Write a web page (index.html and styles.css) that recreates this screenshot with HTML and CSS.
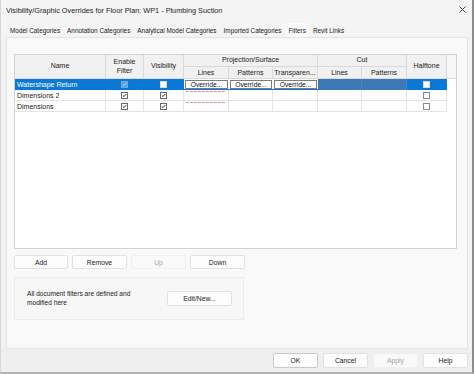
FILE: index.html
```html
<!DOCTYPE html>
<html>
<head>
<meta charset="utf-8">
<link rel="stylesheet" href="styles.css">
</head>
<body>
<div class="window">
  <div class="titlebar">
    <span class="title">Visibility/Graphic Overrides for Floor Plan: WP1 - Plumbing Suction</span>
    <svg class="close" width="7" height="7" viewBox="0 0 7 7"><path d="M0.5 0.5L6.5 6.5M6.5 0.5L0.5 6.5" stroke="#333" stroke-width="0.9" fill="none"/></svg>
  </div>
  <div class="tabs">
    <span class="tab">Model Categories</span>
    <span class="tab">Annotation Categories</span>
    <span class="tab">Analytical Model Categories</span>
    <span class="tab">Imported Categories</span>
    <span class="tab active">Filters</span>
    <span class="tab">Revit Links</span>
  </div>
  <div class="panel">
    <div class="grid-wrap">
      <div class="grid">
        <div class="hc c-name">Name</div>
        <div class="hc c-enable">Enable<br>Filter</div>
        <div class="hc c-vis">Visibility</div>
        <div class="hc c-proj">Projection/Surface</div>
        <div class="hc c-cut">Cut</div>
        <div class="hc c-half">Halftone</div>
        <div class="hc c-extra"></div>
        <div class="hc sub">Lines</div>
        <div class="hc sub">Patterns</div>
        <div class="hc sub">Transparen...</div>
        <div class="hc sub">Lines</div>
        <div class="hc sub">Patterns</div>

        <div class="dc name sel">Watershape Return</div>
        <div class="dc sel"><span class="cb cb-sel"><svg viewBox="0 0 7 7"><path d="M1.3 3.5L2.8 5L5.7 1.6" stroke="#e4eefa" stroke-width="1.1" fill="none"/></svg></span></div>
        <div class="dc sel"><span class="cb cb-white"></span></div>
        <div class="dc ov"><span class="ovbtn">Override...</span></div>
        <div class="dc ov"><span class="ovbtn">Override...</span></div>
        <div class="dc ov"><span class="ovbtn">Override...</span></div>
        <div class="dc sel2"></div>
        <div class="dc sel2"></div>
        <div class="dc sel"><span class="cb cb-white"></span></div>
        <div class="dc blank"></div>

        <div class="dc name">Dimensions 2</div>
        <div class="dc"><span class="cb"><svg viewBox="0 0 7 7"><path d="M1.2 3.4L2.8 5L5.8 1.5" stroke="#111" stroke-width="1.2" fill="none"/></svg></span></div>
        <div class="dc"><span class="cb"><svg viewBox="0 0 7 7"><path d="M1.2 3.4L2.8 5L5.8 1.5" stroke="#111" stroke-width="1.2" fill="none"/></svg></span></div>
        <div class="dc top"><span class="dash"></span></div>
        <div class="dc"></div>
        <div class="dc"></div>
        <div class="dc"></div>
        <div class="dc"></div>
        <div class="dc"><span class="cb cb-empty"></span></div>
        <div class="dc blank"></div>

        <div class="dc name">Dimensions</div>
        <div class="dc"><span class="cb"><svg viewBox="0 0 7 7"><path d="M1.2 3.4L2.8 5L5.8 1.5" stroke="#111" stroke-width="1.2" fill="none"/></svg></span></div>
        <div class="dc"><span class="cb"><svg viewBox="0 0 7 7"><path d="M1.2 3.4L2.8 5L5.8 1.5" stroke="#111" stroke-width="1.2" fill="none"/></svg></span></div>
        <div class="dc top"><span class="dash"></span></div>
        <div class="dc"></div>
        <div class="dc"></div>
        <div class="dc"></div>
        <div class="dc"></div>
        <div class="dc"><span class="cb cb-empty"></span></div>
        <div class="dc blank"></div>
      </div>
    </div>
    <div class="btnrow">
      <span class="btn">Add</span>
      <span class="btn">Remove</span>
      <span class="btn disabled">Up</span>
      <span class="btn">Down</span>
    </div>
    <div class="group">
      <p class="group-text">All document filters are defined and<br>modified here</p>
      <span class="btn edit">Edit/New...</span>
    </div>
  </div>
  <div class="footer">
    <span class="btn fbtn default">OK</span>
    <span class="btn fbtn">Cancel</span>
    <span class="btn fbtn disabled">Apply</span>
    <span class="btn fbtn">Help</span>
  </div>
</div>
</body>
</html>
```

FILE: styles.css
```css
html, body {
  margin: 0;
  padding: 0;
}
body {
  width: 474px;
  height: 374px;
  overflow: hidden;
  background: #f0f0f0;
  font-family: "Liberation Sans", Arial, sans-serif;
  color: #1a1a1a;
}
.window {
  width: 474px;
  height: 374px;
  box-sizing: border-box;
  border-left: 1px solid #d6d6d6;
  border-right: 2px solid #8c8c8c;
  border-bottom: 2px solid #b4b4b4;
  background: #f2f2f2;
  display: flex;
  flex-direction: column;
}
.titlebar {
  height: 20px;
  display: flex;
  align-items: center;
  justify-content: space-between;
  padding: 0 6px 0 5px;
  background: #f4f4f4;
}
.title {
  font-size: 7.3px;
  color: #222;
}
.close {
  display: block;
  margin-top: -1px;
}
.tabs {
  height: 17px;
  display: flex;
  align-items: stretch;
  padding-left: 5.5px;
  background: #f4f4f4;
}
.tab {
  font-size: 6.4px;
  padding: 3px 3.5px 0;
  display: flex;
  align-items: center;
  color: #1a1a1a;
}
.tab.active {
  background: #fbfbfb;
  margin-top: 3px;
  padding-top: 0;
  border-radius: 2px 2px 0 0;
}
.panel {
  height: 312px;
  margin: 0 4px 0 5px;
  box-sizing: border-box;
  border: 1px solid #e4e4e4;
  background: #f9f9f9;
  padding: 16px 0 0 7px;
  display: flex;
  flex-direction: column;
  align-items: flex-start;
}
.grid-wrap {
  width: 443px;
  height: 195px;
  box-sizing: border-box;
  border: 1px solid #d2d2d2;
  background: #fff;
}
.grid {
  display: grid;
  grid-template-columns: 91px 38px 40px 45px 44px 45px 44px 45px 40px 9px;
  grid-template-rows: 12px 12px 11px 11px 11px;
  font-size: 7px;
}
.hc {
  background: #f1f1f1;
  border-right: 1px solid #d9d9d9;
  border-bottom: 1px solid #d9d9d9;
  box-sizing: border-box;
  display: flex;
  align-items: center;
  justify-content: center;
  text-align: center;
  line-height: 8.5px;
  color: #1a1a1a;
  white-space: nowrap;
  overflow: hidden;
}
.c-name { grid-column: 1; grid-row: 1 / 3; }
.c-enable { grid-column: 2; grid-row: 1 / 3; }
.c-vis { grid-column: 3; grid-row: 1 / 3; }
.c-proj { grid-column: 4 / 7; grid-row: 1; }
.c-cut { grid-column: 7 / 9; grid-row: 1; }
.c-half { grid-column: 9; grid-row: 1 / 3; }
.c-extra { grid-column: 10; grid-row: 1 / 3; background: #f6f6f6; border-right: none; }
.hc.sub { padding-top: 1px; }

.dc {
  border-right: 1px solid #e3e3e3;
  border-bottom: 1px solid #e3e3e3;
  box-sizing: border-box;
  display: flex;
  align-items: center;
  justify-content: center;
  white-space: nowrap;
  overflow: hidden;
  background: #fff;
}
.dc.name {
  justify-content: flex-start;
  padding-left: 2px;
  color: #1a1a1a;
}
.dc.sel {
  background: #0a78d6;
  border-right-color: #0a78d6;
  border-bottom-color: #0a78d6;
  color: #fff;
}
.dc.sel2 {
  background: #3c79b6;
  border-right-color: #4a84bd;
  border-bottom-color: #3c79b6;
}
.dc.ov {
  padding: 1px 1px 0 1px;
  border-right: none;
  border-bottom-color: #0a78d6;
  background: #fff;
}
.ovbtn {
  flex: 1;
  height: 100%;
  box-sizing: border-box;
  border: 1px solid #7c7c7c;
  background: #fff;
  display: flex;
  align-items: center;
  justify-content: center;
  font-size: 6.8px;
  color: #111;
}
.dc.blank {
  border: none;
  background: #fff;
}
.dc.top {
  align-items: flex-start;
  padding-top: 1px;
}
.dash {
  display: block;
  width: 40px;
  height: 1px;
  background: repeating-linear-gradient(90deg, #e68aa0 0 2px, #b8a8da 2px 3px, transparent 3px 4px);
}
.cb {
  width: 7px;
  height: 7px;
  box-sizing: border-box;
  border: 1px solid #6a6a6a;
  background: #fff;
  display: flex;
}
.cb svg {
  width: 5px;
  height: 5px;
}
.cb-sel {
  border-color: #6ea7e2;
  background: #5d9ee0;
}
.cb-white {
  border-color: #d0dff0;
  background: #fff;
}
.cb-empty {
  border-color: #8a8a8a;
  background: #fff;
}

.btnrow {
  display: flex;
  gap: 4px;
  margin-top: 6px;
}
.btn {
  height: 14px;
  box-sizing: border-box;
  border: 1px solid #e2e2e2;
  border-radius: 2px;
  background: #fdfdfd;
  display: flex;
  align-items: center;
  justify-content: center;
  font-size: 6.8px;
  color: #1a1a1a;
}
.btnrow .btn {
  width: 55px;
}
.btnrow .btn:first-child {
  width: 54px;
}
.btn.disabled {
  color: #a6a6a6;
  background: #f9f9f9;
  border-color: #f0f0f0;
}
.group {
  width: 230px;
  height: 43px;
  box-sizing: border-box;
  margin-top: 8px;
  border: 1px solid #ececec;
  background: #f7f7f7;
  display: flex;
  align-items: center;
  justify-content: space-between;
  padding: 0 11px 1px 12px;
}
.group-text {
  margin: 0;
  font-size: 6.6px;
  line-height: 9px;
  color: #1a1a1a;
}
.btn.edit {
  width: 65px;
  height: 15px;
}
.footer {
  flex: 1;
  display: flex;
  justify-content: flex-end;
  align-items: flex-start;
  gap: 5px;
  padding: 4px 4px 0 0;
  background: #efefef;
}
.fbtn {
  width: 45px;
  height: 15px;
}
.fbtn.default {
  border-color: #c9c9c9;
}
```
